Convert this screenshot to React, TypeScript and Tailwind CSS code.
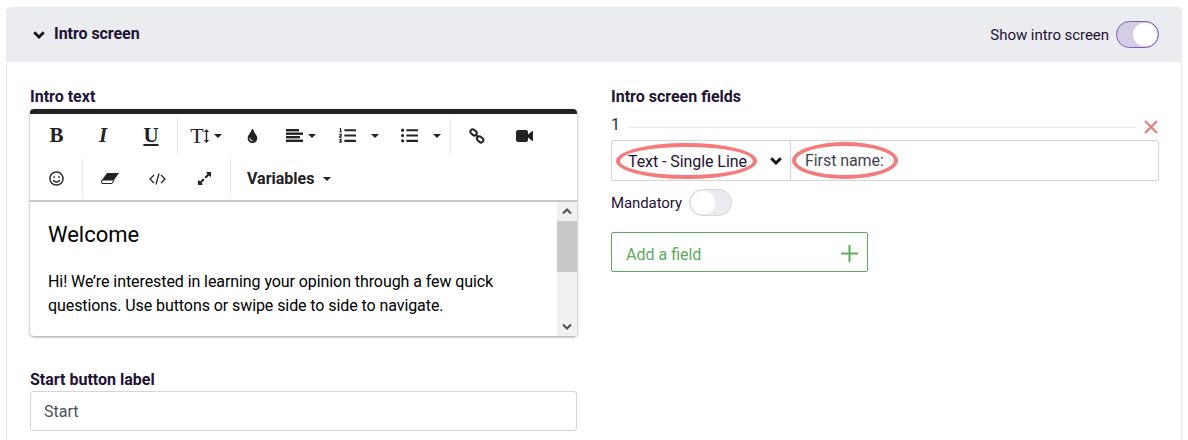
import React from 'react';
import { FaExpandAlt, FaListOl, FaListUl, FaRegSmile, FaTint } from 'react-icons/fa';

const Caret = () => (
  <svg width="8" height="4" viewBox="0 0 8 4" className="shrink-0">
    <path d="M0 0H8L4 4Z" fill="#222" />
  </svg>
);

const Chevron: React.FC<{ color?: string }> = ({ color = '#15131f' }) => (
  <svg width="12" height="8" viewBox="0 0 12 8" className="shrink-0">
    <path d="M1.2 1.3 6 6 10.8 1.3" fill="none" stroke={color} strokeWidth="2.8" />
  </svg>
);

const ToolButton: React.FC<{ w: string; children: React.ReactNode }> = ({ w, children }) => (
  <div className={`flex h-[43px] items-center justify-center text-[#222] ${w}`}>{children}</div>
);

const Group: React.FC<{ last?: boolean; children: React.ReactNode }> = ({ last, children }) => (
  <div className={`flex h-[39px] items-center ${last ? '' : 'border-r border-[#ebecf0]'}`}>{children}</div>
);

const serif = "font-['Liberation_Serif',serif] text-[21px] font-bold leading-none";

export default function App() {
  return (
    <div className="h-[440px] w-[1188px] overflow-hidden bg-white pt-[7px] pl-[6px] font-['Roboto',sans-serif] text-[15px] text-[#1f1235]">
      <div className="h-[433px] w-[1176px] rounded-t-[5px] border-x border-[#ebecf0]">
        <header className="-mx-px flex h-[55px] items-center justify-between rounded-t-[5px] bg-[#ebecf0] pr-[23px] pl-[27px]">
          <div className="flex items-center gap-[9px] text-[16px] font-bold">
            <Chevron />
            <span className="-mt-[1px] tracking-[-0.05px]">Intro screen</span>
          </div>
          <div className="flex items-center gap-[7px]">
            <span className="mt-px tracking-[-0.05px]">Show intro screen</span>
            <div className="flex h-[27px] w-[43px] items-center justify-end rounded-full border border-[#7b5fb0] bg-[#d5cde6]">
              <div className="mr-px h-[23px] w-[24px] rounded-full bg-white" />
            </div>
          </div>
        </header>

        <div className="flex gap-[34px] pt-[25px] pl-[23px]">
          <section className="w-[547px]">
            <label className="block h-[22px] text-[16px] leading-[20px] font-bold">Intro text</label>
            <div className="rounded-[4px] shadow-[0_1px_3px_rgba(0,0,0,0.4)]">
              <div className="h-[5px] rounded-t-[4px] bg-[#222]" />
              <div className="h-[88px] border-b-2 border-[#c8c8c8]">
                <div className="flex h-[43px] items-center pl-[3px]">
                  <Group>
                    <ToolButton w="w-[47px]"><span className={serif}>B</span></ToolButton>
                    <ToolButton w="w-[46px]"><span className={`${serif} italic`}>I</span></ToolButton>
                    <ToolButton w="w-[51px] pr-px"><span className={`${serif} underline`}>U</span></ToolButton>
                  </Group>
                  <Group>
                    <ToolButton w="w-[56px]">
                      <span className="font-['Liberation_Serif',serif] text-[22px] leading-none">T</span>
                      <svg width="5" height="14" viewBox="0 0 5 14" className="mr-[5px]">
                        <path d="M2.5 0 5 3H3.2V11H5L2.5 14 0 11H1.8V3H0Z" fill="#222" />
                      </svg>
                      <Caret />
                    </ToolButton>
                    <ToolButton w="w-[36px]"><FaTint className="h-[14px] w-[11px]" /></ToolButton>
                    <ToolButton w="w-[62px]">
                      <svg width="17" height="13" viewBox="0 0 17 13" fill="#222" className="mr-[5px]">
                        <rect width="13" height="2.4" />
                        <rect y="3.5" width="17" height="2.4" />
                        <rect y="7" width="14" height="2.4" />
                        <rect y="10.6" width="17" height="2.4" />
                      </svg>
                      <Caret />
                    </ToolButton>
                    <ToolButton w="w-[53px]">
                      <FaListOl className="mr-[15px] h-[17px] w-[17px]" />
                      <Caret />
                    </ToolButton>
                    <ToolButton w="w-[65px] pl-[7px]">
                      <FaListUl className="mr-[15px] h-[17px] w-[17px]" />
                      <Caret />
                    </ToolButton>
                  </Group>
                  <Group last>
                    <ToolButton w="w-[52px]">
                      <svg width="16" height="16" viewBox="0 0 16 16" fill="none" stroke="#222" strokeWidth="2">
                        <rect x="-3.4" y="-2.4" width="6.8" height="4.8" rx="2.4" transform="translate(4.6 4.4) rotate(40)" />
                        <rect x="-3.4" y="-2.4" width="6.8" height="4.8" rx="2.4" transform="translate(11.2 11.4) rotate(40)" />
                        <path d="M6.5 6.5 9.5 9.5" />
                      </svg>
                    </ToolButton>
                    <ToolButton w="w-[43px]">
                      <svg width="17" height="12" viewBox="0 0 17 12" fill="#222">
                        <rect width="12" height="12" rx="2.2" />
                        <path d="M12 4.5 17 .5V11.5L12 7.5Z" />
                      </svg>
                    </ToolButton>
                  </Group>
                </div>
                <div className="flex h-[43px] items-center pl-[3px]">
                  <Group>
                    <ToolButton w="w-[49px] pr-[3px]"><FaRegSmile className="h-[15px] w-[15px]" /></ToolButton>
                  </Group>
                  <Group>
                    <ToolButton w="w-[53px]">
                      <svg width="18" height="11" viewBox="0 0 18 11">
                        <path d="M6 0H18L13 7H1Z" fill="#222" />
                        <path d="M1 7H13L11 10.5H1L.5 9Z" fill="#fff" stroke="#222" strokeWidth="1" />
                      </svg>
                    </ToolButton>
                    <ToolButton w="w-[42px]">
                      <svg width="17" height="12" viewBox="0 0 17 12" fill="none" stroke="#222" strokeWidth="1.3">
                        <path d="M5 2 1 6 5 10M12 2 16 6 12 10M10 .5 7 11.5" />
                      </svg>
                    </ToolButton>
                    <ToolButton w="w-[52px]"><FaExpandAlt className="h-[15px] w-[15px]" /></ToolButton>
                  </Group>
                  <Group last>
                    <div className="flex items-center gap-[9px] pl-[16px] text-[16px] font-bold text-[#222]">
                      Variables
                      <Caret />
                    </div>
                  </Group>
                </div>
              </div>
              <div className="flex h-[134px] rounded-b-[4px] text-black">
                <div className="flex-1 pt-[20px] pl-[18px]">
                  <h2 className="text-[22px] leading-[26px]">Welcome</h2>
                  <p className="mt-[22px] w-[470px] text-[16px] leading-[24px] tracking-[-0.08px]">
                    Hi! We’re interested in learning your opinion through a few quick questions. Use buttons or swipe side to side to navigate.
                  </p>
                </div>
                <div className="flex w-[20px] flex-col bg-[#f1f1f1]">
                  <div className="flex h-[19px] items-center justify-center">
                    <svg width="10" height="7" viewBox="0 0 10 7"><path d="M1 5.5 5 1.5 9 5.5" fill="none" stroke="#505050" strokeWidth="2" /></svg>
                  </div>
                  <div className="h-[51px] w-full bg-[#c8c8c8]" />
                  <div className="flex-1" />
                  <div className="flex h-[19px] items-center justify-center">
                    <svg width="10" height="7" viewBox="0 0 10 7"><path d="M1 1.5 5 5.5 9 1.5" fill="none" stroke="#505050" strokeWidth="2" /></svg>
                  </div>
                </div>
              </div>
            </div>
            <label className="mt-[34px] block h-[21px] text-[16px] leading-[20px] font-bold">Start button label</label>
            <div className="flex h-[40px] w-full items-center rounded-[3px] border border-[#d5d6dc] pl-[13px] text-[16px] text-[#4a4f5c]">
              <span className="mt-px">Start</span>
            </div>
          </section>

          <section className="w-[548px]">
            <label className="block h-[21px] text-[16px] leading-[20px] font-bold">Intro screen fields</label>
            <div className="flex h-[32px] items-center pt-[6px]">
              <span className="-mt-[4px] text-[16px] leading-none text-[#28304a]">1</span>
              <div className="mr-[7px] ml-[8px] h-px flex-1 bg-[#ebecf0]" />
              <svg width="14" height="14" viewBox="0 0 14 14" className="mr-px"><path d="M1 1 13 13M13 1 1 13" stroke="#ea7a7a" strokeWidth="2" /></svg>
            </div>
            <div className="relative flex h-[41px] rounded-[2px] border border-[#d5d6dc]">
              <div className="flex w-[179px] items-center justify-between border-r border-[#d5d6dc] pr-[8px] pl-[16px] text-[16px]">
                <span className="mt-[3px] tracking-[-0.07px] text-[#1f1235]">Text - Single Line</span>
                <Chevron color="#000" />
              </div>
              <div className="flex flex-1 items-center pl-[14px] text-[16px] tracking-[-0.07px] text-[#3f4350]">First name:</div>
              <div className="absolute top-[2px] left-[4px] h-[36px] w-[141px] rounded-[50%] border-[4px] border-[#f57a7a]" />
              <div className="absolute top-[1px] left-[180px] h-[37px] w-[106px] rounded-[50%] border-[4px] border-[#f57a7a]" />
            </div>
            <div className="mt-[8px] flex items-center gap-[7px]">
              <span className="mt-[2px] tracking-[-0.1px] text-[#1f1235]">Mandatory</span>
              <div className="flex h-[27px] w-[43px] items-center rounded-full border border-[#d5d6dc] bg-[#ebecf0]">
                <div className="ml-px h-[23px] w-[24px] rounded-full bg-white" />
              </div>
            </div>
            <div className="mt-[16px] flex h-[40px] w-[257px] items-center justify-between rounded-[2px] border border-[#5cab5e] pr-[9px] pl-[14px] text-[16px] text-[#5cab5e]">
              <span className="mt-[6px]">Add a field</span>
              <svg width="17" height="17" viewBox="0 0 17 17" className="mt-[2px]"><path d="M8.5 0V17M0 8.5H17" stroke="#5cab5e" strokeWidth="2" /></svg>
            </div>
          </section>
        </div>
      </div>
    </div>
  );
}
